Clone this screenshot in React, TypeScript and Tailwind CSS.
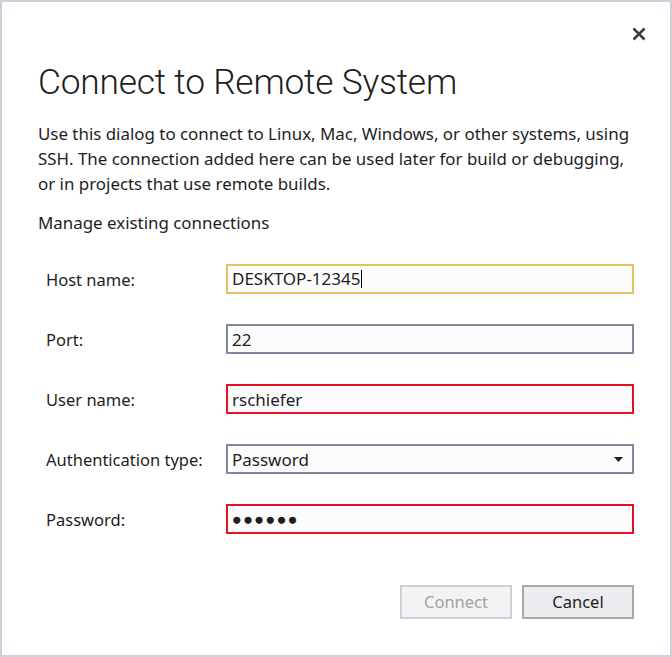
import React from "react";

const font = { fontFamily: '"Noto Sans", "Open Sans", sans-serif' };
const titleFont = { fontFamily: 'Roboto, "Noto Sans", sans-serif' };

const rows = [
  { label: "Host name:", value: "DESKTOP-12345", border: "border-[#e3c062]", caret: true },
  { label: "Port:", value: "22", border: "border-[#7f8a9e]" },
  { label: "User name:", value: "rschiefer", border: "border-[#e81123]" },
  { label: "Authentication type:", value: "Password", border: "border-[#7f8a9e]", select: true },
  { label: "Password:", value: "●●●●●●", border: "border-[#e81123]", password: true },
];

export default function App() {
  return (
    <div
      className="w-[672px] h-[657px] bg-white border-2 border-[#ccd0dc] text-[#1e1e1e] flex flex-col"
      style={font}
    >
      {/* Close */}
      <div className="flex justify-end pt-[24px] pr-[23px] h-[52px]">
        <button className="w-[16px] h-[16px] flex items-center justify-center">
          <svg width="14" height="14" viewBox="0 0 14 14">
            <path d="M1.5 1.5 L12.5 12.5 M12.5 1.5 L1.5 12.5" stroke="#3c3c3c" strokeWidth="2.5" />
          </svg>
        </button>
      </div>

      <div className="px-[36px] flex flex-col flex-1">
        <h1
          className="text-[35.3px] font-light leading-[40px] mt-[8px] tracking-[-0.2px]"
          style={titleFont}
        >
          Connect to Remote System
        </h1>

        <p className="text-[16.9px] leading-[25px] mt-[19px] whitespace-nowrap">
          Use this dialog to connect to Linux, Mac, Windows, or other systems, using
          <br />
          SSH. The connection added here can be used later for build or debugging,
          <br />
          or in projects that use remote builds.
        </p>

        <p className="text-[16.9px] leading-[25px] mt-[14px]">Manage existing connections</p>

        <div className="flex flex-col gap-[30px] mt-[29px]">
          {rows.map((r) => (
            <div key={r.label} className="flex items-center h-[30px]">
              <span className="w-[188px] pl-[8px] text-[16.5px] pt-[2px]">{r.label}</span>
              <div
                className={`w-[408px] h-[30px] border-2 ${r.border} bg-[#fcfcfc] flex items-center px-[4px]`}
              >
                <span
                  className={`flex-1 leading-none ${
                    r.password ? "tracking-[1.2px] text-[16.5px]" : "text-[17px]"
                  }`}
                >
                  {r.value}
                  {r.caret && (
                    <span className="inline-block w-[1px] h-[18px] bg-black align-[-3px]" />
                  )}
                </span>
                {r.select && (
                  <svg width="9" height="5" viewBox="0 0 9 5" className="mr-[5px]">
                    <path d="M0 0 L9 0 L4.5 5 Z" fill="#1e1e1e" />
                  </svg>
                )}
              </div>
            </div>
          ))}
        </div>

        <div className="flex justify-end gap-[10px] mt-[51px]">
          <button className="w-[112px] h-[34px] bg-[#f3f3f3] border-2 border-[#ccd0dc] text-[#a2a2a2] text-[16.5px]">
            Connect
          </button>
          <button className="w-[112px] h-[34px] bg-[#ececf0] border-2 border-[#a8a8a8] text-[16.5px]">
            Cancel
          </button>
        </div>
      </div>
    </div>
  );
}
